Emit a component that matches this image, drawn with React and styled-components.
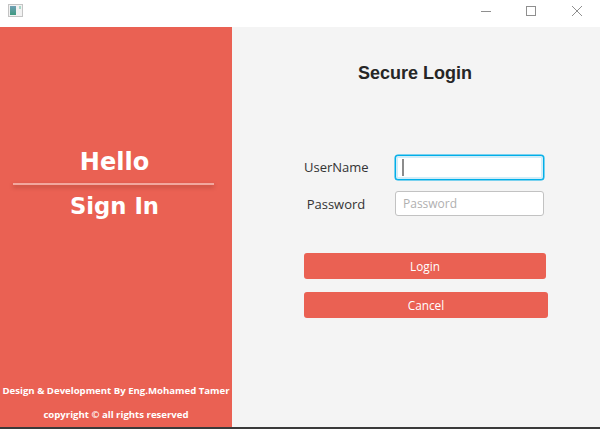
import React from "react";
import styled, { createGlobalStyle } from "styled-components";

const GlobalStyle = createGlobalStyle`
  html, body {
    margin: 0;
    padding: 0;
    background: #ffffff;
  }

  * {
    box-sizing: border-box;
  }
`;

const Window = styled.div`
  width: 600px;
  height: 429px;
  display: flex;
  flex-direction: column;
  overflow: hidden;
  background: #ffffff;
  border-bottom: 2px solid #3a3a3a;
`;

const TitleBar = styled.div`
  height: 27px;
  flex: none;
  display: flex;
  align-items: flex-start;
  justify-content: space-between;
  padding: 4px 0 0 8px;
  background: #ffffff;
`;

const WindowControls = styled.div`
  display: flex;
  margin-top: -4px;
`;

const ControlButton = styled.div`
  width: 46px;
  height: 23px;
  display: flex;
  align-items: flex-start;
  padding: 6px 0 0 18px;
`;

const Content = styled.div`
  flex: 1;
  display: flex;
  min-height: 0;
`;

const SidePanel = styled.aside`
  width: 232px;
  flex: none;
  display: flex;
  flex-direction: column;
  align-items: center;
  padding-top: 118px;
  background: #ea6153;
  color: #ffffff;
`;

const Heading = styled.div`
  display: flex;
  flex-direction: column;
  align-items: center;
  padding-right: 3px;
`;

const Hello = styled.div`
  font-family: "DejaVu Sans", Verdana, sans-serif;
  font-size: 24px;
  font-weight: 700;
  line-height: 34px;
`;

const Divider = styled.div`
  width: 201px;
  height: 2px;
  margin: 4px 2px 0 0;
  background: #f2a79e;
  box-shadow: 0 2px 4px rgba(90, 30, 25, 0.4);
`;

const SignIn = styled.div`
  font-family: "DejaVu Sans", Verdana, sans-serif;
  font-size: 22.7px;
  font-weight: 700;
  line-height: 30px;
  margin-top: 6px;
`;

const Footer = styled.div`
  margin-top: auto;
  padding-bottom: 6px;
  display: flex;
  flex-direction: column;
  align-items: center;
  gap: 12px;
`;

const FooterLine = styled.div`
  font-family: "Open Sans", "Noto Sans", sans-serif;
  font-size: 9.6px;
  font-weight: 700;
  line-height: 12px;
  white-space: nowrap;
`;

const MainPanel = styled.main`
  flex: 1;
  display: flex;
  flex-direction: column;
  padding: 34px 52px 0 72px;
  background: #f4f4f4;
`;

const Title = styled.h1`
  margin: 0;
  padding-right: 22px;
  text-align: center;
  font-family: "Liberation Sans", Arial, sans-serif;
  font-size: 18px;
  font-weight: 700;
  line-height: 24px;
  color: #262626;
`;

const Form = styled.div`
  margin-top: 70px;
  display: flex;
  flex-direction: column;
  gap: 11px;
`;

const FieldRow = styled.div`
  display: grid;
  grid-template-columns: 64px 149px;
  column-gap: 27px;
  align-items: center;
`;

const FieldLabel = styled.label`
  padding-bottom: ${(p) => (p.$raised ? "2px" : "0")};
  font-family: "Open Sans", "Noto Sans", sans-serif;
  font-size: 13px;
  text-align: center;
  white-space: nowrap;
  color: #333333;
`;

const Field = styled.div`
  height: 25px;
  display: flex;
  align-items: center;
  padding: 0 7px;
  background: #ffffff;
  border-radius: 3px;
  border: 1px solid ${(p) => (p.$focused ? "#00aee8" : "#c2c2c2")};
  box-shadow: ${(p) => (p.$focused ? "inset 0 0 0 2px #d2edf8, 0 0 0 0.5px #00aee8" : "none")};
  font-family: "Open Sans", "Noto Sans", sans-serif;
  font-size: 12px;
  color: #b0b0b0;
`;

const Caret = styled.span`
  width: 2px;
  height: 17px;
  margin-left: -1px;
  background: #8c8c8c;
`;

const Actions = styled.div`
  margin-top: 37px;
  display: flex;
  flex-direction: column;
  align-items: flex-start;
  gap: 13px;
`;

const ActionButton = styled.button`
  width: ${(p) => p.$width}px;
  height: 26px;
  padding: 0 0 1px;
  border: none;
  border-radius: 3px;
  background: #ea6153;
  color: #ffffff;
  font-family: "Open Sans", "Noto Sans", sans-serif;
  font-size: 11.8px;
`;

const AppIcon = () => (
  <svg width="15" height="13" viewBox="0 0 15 13">
    <defs>
      <linearGradient id="tile" x1="0" y1="0" x2="0" y2="1">
        <stop offset="0" stopColor="#6f9fb5" />
        <stop offset="1" stopColor="#3f9a80" />
      </linearGradient>
    </defs>
    <rect x="0.5" y="0.5" width="14" height="12" fill="#f2f2f2" stroke="#c4c4c4" />
    <rect x="2" y="2" width="6" height="9" fill="url(#tile)" />
    <rect x="11" y="2" width="2" height="3" fill="#a8d8c8" />
  </svg>
);

const MinimizeIcon = () => (
  <svg width="11" height="10" viewBox="0 0 11 10">
    <path d="M1 5.5H11" stroke="#8f8f8f" strokeWidth="1" />
  </svg>
);

const MaximizeIcon = () => (
  <svg width="10" height="10" viewBox="0 0 10 10">
    <rect x="0.5" y="0.5" width="9" height="9" fill="none" stroke="#8f8f8f" />
  </svg>
);

const CloseIcon = () => (
  <svg width="10" height="10" viewBox="0 0 10 10">
    <path d="M0 0L10 10M10 0L0 10" stroke="#8f8f8f" strokeWidth="1" />
  </svg>
);

const App = () => {
  return (
    <>
      <GlobalStyle />
      <Window>
        <TitleBar>
          <AppIcon />
          <WindowControls>
            <ControlButton>
              <MinimizeIcon />
            </ControlButton>
            <ControlButton>
              <MaximizeIcon />
            </ControlButton>
            <ControlButton>
              <CloseIcon />
            </ControlButton>
          </WindowControls>
        </TitleBar>

        <Content>
          <SidePanel>
            <Heading>
              <Hello>Hello</Hello>
              <Divider />
              <SignIn>Sign In</SignIn>
            </Heading>
            <Footer>
              <FooterLine>Design &amp; Development By Eng.Mohamed Tamer</FooterLine>
              <FooterLine>copyright © all rights reserved</FooterLine>
            </Footer>
          </SidePanel>

          <MainPanel>
            <Title>Secure Login</Title>
            <Form>
              <FieldRow>
                <FieldLabel $raised>UserName</FieldLabel>
                <Field $focused>
                  <Caret />
                </Field>
              </FieldRow>
              <FieldRow>
                <FieldLabel>Password</FieldLabel>
                <Field>Password</Field>
              </FieldRow>
            </Form>
            <Actions>
              <ActionButton $width={242}>Login</ActionButton>
              <ActionButton $width={244}>Cancel</ActionButton>
            </Actions>
          </MainPanel>
        </Content>
      </Window>
    </>
  );
};

export default App;
